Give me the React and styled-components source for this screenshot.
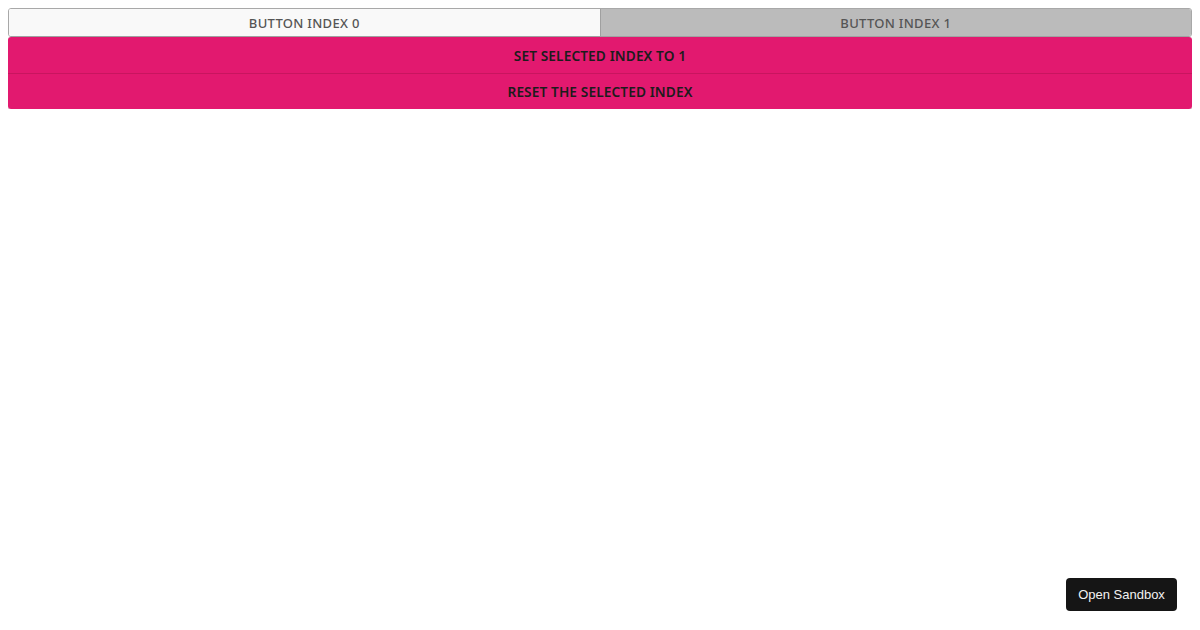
import React, { useState } from "react";
import styled, { createGlobalStyle } from "styled-components";

const GlobalStyle = createGlobalStyle`
  body {
    margin: 8px;
    background: #ffffff;
    font-family: "Noto Sans", "DejaVu Sans", sans-serif;
  }
`;

const Group = styled.div`
  display: flex;
  height: 29px;
  border: 1px solid #a8a8a8;
  border-radius: 3px;
  overflow: hidden;
  box-sizing: border-box;
`;

const GroupButton = styled.button`
  flex: 1;
  border: none;
  border-left: ${(p) => (p.$first ? "none" : "1px solid #a0a0a0")};
  background: ${(p) => (p.$selected ? "#bbbbbb" : "#f9f9f9")};
  color: #555555;
  font-family: "Noto Sans", "DejaVu Sans", sans-serif;
  font-size: 13px;
  font-weight: 500;
  letter-spacing: 0.3px;
  text-transform: uppercase;
  padding: 0;
  cursor: pointer;
`;

const Actions = styled.div`
  display: flex;
  flex-direction: column;
  border-radius: 3px;
  overflow: hidden;
  box-shadow: 0 1px 3px rgba(0, 0, 0, 0.35);
`;

const ActionButton = styled.button`
  height: 36px;
  border: none;
  border-top: ${(p) => (p.$first ? "none" : "1px solid #c8155f")};
  background: #e2196f;
  color: #1c1c1c;
  font-family: "Noto Sans", "DejaVu Sans", sans-serif;
  font-size: 13.7px;
  font-weight: 600;
  letter-spacing: 0.1px;
  text-transform: uppercase;
  padding: 0;
  cursor: pointer;
`;

const SandboxLink = styled.a`
  position: fixed;
  right: 23px;
  bottom: 19px;
  display: flex;
  align-items: center;
  justify-content: center;
  width: 111px;
  height: 33px;
  background: #151515;
  color: #f2f2f2;
  border-radius: 4px;
  font-family: "Liberation Sans", Arial, sans-serif;
  font-size: 13px;
  text-decoration: none;
`;

export default function App() {
  const [selected, setSelected] = useState(1);
  return (
    <>
      <GlobalStyle />
      <Group>
        {[0, 1].map((i) => (
          <GroupButton
            key={i}
            $first={i === 0}
            $selected={selected === i}
            onClick={() => setSelected(i)}
          >
            Button index {i}
          </GroupButton>
        ))}
      </Group>
      <Actions>
        <ActionButton $first onClick={() => setSelected(1)}>
          Set selected index to 1
        </ActionButton>
        <ActionButton onClick={() => setSelected(null)}>
          Reset the selected index
        </ActionButton>
      </Actions>
      <SandboxLink href="#">Open Sandbox</SandboxLink>
    </>
  );
}
